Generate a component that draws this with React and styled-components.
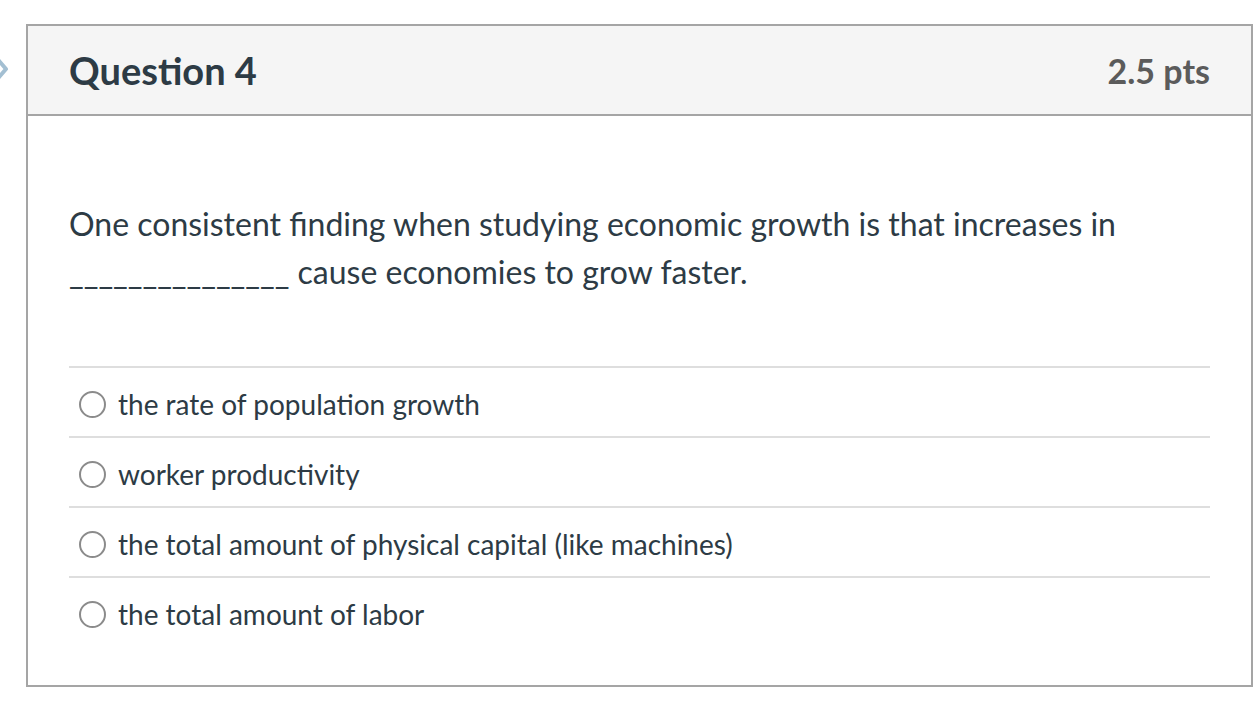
import React from "react";
import styled, { createGlobalStyle } from "styled-components";

const Global = createGlobalStyle`
  html, body { margin: 0; padding: 0; background: #fff; }
  body { font-family: Lato, "Noto Sans", "Liberation Sans", sans-serif; color: #2d3b45; }
`;

const Page = styled.div`
  position: relative;
  width: 1256px;
  height: 724px;
  box-sizing: border-box;
  padding: 24px 3px 0 26px;
  overflow: hidden;
`;

const Chevron = styled.svg`
  position: absolute;
  left: -12px;
  top: 53px;
`;

const Card = styled.section`
  border: 2px solid #a5a5a5;
  background: #fff;
`;

const Header = styled.header`
  display: flex;
  align-items: center;
  justify-content: space-between;
  height: 88px;
  padding: 0 41px;
  background: #f5f5f5;
  border-bottom: 2px solid #a5a5a5;
`;

const Title = styled.h2`
  margin: 0;
  font-size: 38px;
  font-weight: 700;
  color: #2d3b45;
`;

const Points = styled.div`
  font-size: 34px;
  font-weight: 700;
  color: #5b5b5b;
`;

const Body = styled.div`
  padding: 84px 41px 39px;
`;

const Prompt = styled.p`
  margin: 0 0 70px;
  font-size: 32px;
  line-height: 48px;
  color: #2d3b45;
`;

const Answer = styled.label`
  box-sizing: border-box;
  display: flex;
  align-items: center;
  gap: 12px;
  height: 70px;
  padding: 4px 0 0 10px;
  border-top: 2px solid #dedede;
  font-size: 28px;
  color: #2d3b45;
`;

const Radio = styled.span`
  box-sizing: border-box;
  width: 27px;
  height: 27px;
  border-radius: 50%;
  border: 2.5px solid #8b8b8b;
  background: #fff;
  flex: none;
`;

const answers = [
  "the rate of population growth",
  "worker productivity",
  "the total amount of physical capital (like machines)",
  "the total amount of labor",
];

export default function App() {
  return (
    <>
      <Global />
      <Page>
        <Chevron width="22" height="32" viewBox="0 0 22 32">
          <path d="M6 2 L18 16 L6 30" fill="none" stroke="#a3bfd2" strokeWidth="4" strokeLinejoin="round" />
        </Chevron>
        <Card>
          <Header>
            <Title>Question 4</Title>
            <Points>2.5 pts</Points>
          </Header>
          <Body>
            <Prompt>
              One consistent finding when studying economic growth is that increases in _______________ cause economies to grow faster.
            </Prompt>
            <div>
              {answers.map((a) => (
                <Answer key={a}>
                  <Radio />
                  {a}
                </Answer>
              ))}
            </div>
          </Body>
        </Card>
      </Page>
    </>
  );
}
